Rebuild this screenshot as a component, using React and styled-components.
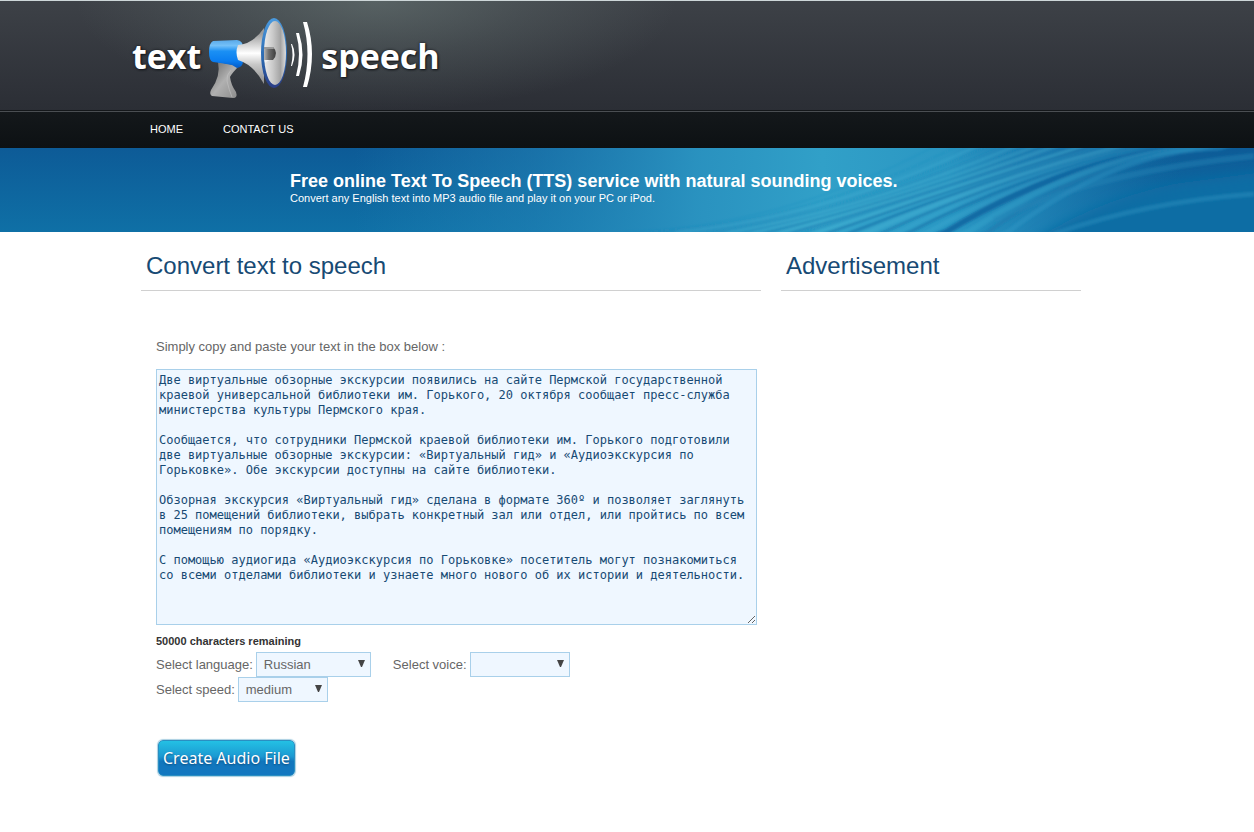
import React, { useState } from 'react'
import styled, { createGlobalStyle, css } from 'styled-components'

const GlobalStyle = createGlobalStyle`
  * {
    box-sizing: border-box;
  }
  body {
    margin: 0;
    background-color: white;
    color: #666;
    font-family: "Liberation Sans", Arial, sans-serif;
    font-size: 13px;
  }
`

const Inner = styled.div`
  width: 100%;
  max-width: 990px;
  margin: 0 auto;
`

const Header = styled.header`
  border-top: 1px solid #cdd6d8;
  background:
    radial-gradient(ellipse 300px 110px at 30% 0, rgba(120, 138, 134, 0.45), rgba(120, 138, 134, 0.2) 50%, rgba(120, 138, 134, 0)),
    linear-gradient(#3d4147, #2b2e35);
`

const Logo = styled.a`
  display: inline-flex;
  align-items: center;
  height: 109px;
  color: white;
  text-decoration: none;
`

const LogoText = styled.span`
  font-family: "Open Sans", sans-serif;
  font-size: 34px;
  font-weight: 700;
  line-height: 48px;
  text-shadow: 0 0 3px #15181c, 1px 1px 2px #15181c;
`

const LogoDrawing = styled.svg`
  width: 120px;
  height: 95px;
  margin-top: 4px;
`

const Nav = styled.nav`
  border-top: 1px solid #14171a;
  box-shadow: inset 0 1px #4a4e52;
  background: linear-gradient(#14181b, #0d1113);
`

const NavList = styled.ul`
  display: flex;
  gap: 40px;
  margin: 0;
  padding: 0 18px;
  list-style: none;
`

const NavLink = styled.a`
  color: white;
  font-size: 11px;
  line-height: 37px;
  text-decoration: none;
  text-transform: uppercase;
`

const Banner = styled.section`
  position: relative;
  overflow: hidden;
  height: 84px;
  padding-top: 22px;
  color: white;
  background: linear-gradient(#0d5b97, #0f70a6);
`

const Waves = styled.svg`
  position: absolute;
  top: 0;
  right: 0;
  width: 900px;
  height: 84px;
`

const BannerText = styled.div`
  position: relative;
  padding-left: 158px;
`

const BannerTitle = styled.h1`
  margin: 0;
  font-size: 18px;
  line-height: 22px;
`

const BannerNote = styled.p`
  margin: 0;
  font-size: 11px;
  line-height: 13px;
`

const Columns = styled.main`
  display: grid;
  grid-template-columns: minmax(0, 620px) minmax(0, 300px);
  gap: 20px;
  padding: 0 9px;
`

const SectionTitle = styled.h2`
  margin: 0;
  padding: 16px 5px 7px;
  border-bottom: 1px solid #d0d0d0;
  color: #174a74;
  font-size: 24px;
  font-weight: 400;
  line-height: 35px;
`

const Form = styled.form`
  display: flex;
  flex-direction: column;
  align-items: flex-start;
  padding: 48px 4px 48px 15px;
`

const fieldBox = css`
  border: 1px solid #a9d0ea;
  border-radius: 0;
  background-color: #eff7ff;
  outline: none;
`

const TextLabel = styled.label`
  line-height: 15px;
`

const TextBox = styled.textarea`
  ${fieldBox}
  display: block;
  width: 100%;
  height: 256px;
  margin: 15px 0 9px;
  padding: 3px 2px;
  color: #174a74;
  font-family: "DejaVu Sans Mono", monospace;
  font-size: 12px;
  line-height: 15px;
  resize: both;
`

const Remaining = styled.strong`
  color: #333;
  font-size: 11px;
  line-height: 15px;
  margin-bottom: 3px;
`

const FieldRow = styled.div`
  display: flex;
  gap: 22px;
`

const Field = styled.label`
  display: flex;
  align-items: center;
  gap: 3px;
`

const SelectWrap = styled.span`
  display: grid;
  align-items: center;
  width: ${(props) => props.$width}px;

  > * {
    grid-area: 1 / 1;
  }
`

const Select = styled.select`
  ${fieldBox}
  width: 100%;
  height: 25px;
  padding: 0 7px;
  color: #666;
  font-family: inherit;
  font-size: 13px;
  appearance: none;
`

const Arrow = styled.svg`
  justify-self: end;
  width: 7px;
  height: 7px;
  margin: 0 6px 2px 0;
  fill: #444;
  pointer-events: none;
`

const SubmitButton = styled.button`
  height: 36px;
  margin: 38px 2px 0;
  padding: 0 4px;
  border: 1px solid #2a8fc2;
  border-radius: 5px;
  background: linear-gradient(#23c0e4, #1c9ad2 45%, #1277bd 60%, #1277c0);
  box-shadow: 0 0 1px 1px #a9cfe2;
  color: white;
  font-family: "Noto Sans", sans-serif;
  font-size: 16px;
  line-height: 30px;
  text-shadow: 0 1px 2px #0b4f80;
  white-space: nowrap;
  cursor: pointer;
`

const article = `Две виртуальные обзорные экскурсии появились на сайте Пермской государственной краевой универсальной библиотеки им. Горького, 20 октября сообщает пресс-служба министерства культуры Пермского края.

Сообщается, что сотрудники Пермской краевой библиотеки им. Горького подготовили две виртуальные обзорные экскурсии: «Виртуальный гид» и «Аудиоэкскурсия по Горьковке». Обе экскурсии доступны на сайте библиотеки.

Обзорная экскурсия «Виртуальный гид» сделана в формате 360º и позволяет заглянуть в 25 помещений библиотеки, выбрать конкретный зал или отдел, или пройтись по всем помещениям по порядку.

С помощью аудиогида «Аудиоэкскурсия по Горьковке» посетитель могут познакомиться со всеми отделами библиотеки и узнаете много нового об их истории и деятельности.`

// Strands of the banner: [x at the bottom edge, colour, width, opacity]
const strands = [
  [270, '#1f86b8', 1, 0.3],
  [300, '#1f86b8', 1, 0.4],
  [325, '#45b3d6', 2, 0.3],
  [340, '#1f86b8', 1, 0.5],
  [362, '#1f86b8', 2, 0.4],
  [376, '#4bb8d8', 2, 0.3],
  [390, '#1f86b8', 1, 0.6],
  [402, '#4bb8d8', 2, 0.3],
  [414, '#1a7cb0', 2, 0.5],
  [428, '#4bb8d8', 3, 0.3],
  [440, '#1a7cb0', 2, 0.6],
  [452, '#1a7cb0', 1, 0.6],
  [464, '#4bb8d8', 3, 0.4],
  [476, '#1672a8', 2, 0.6],
  [488, '#3fb0d3', 2, 0.3],
  [498, '#1672a8', 3, 0.6],
  [514, '#48b6d8', 5, 0.4],
  [530, '#1672a8', 2, 0.6],
  [544, '#3fb0d3', 4, 0.3],
  [556, '#1672a8', 3, 0.6],
  [574, '#3fb0d3', 4, 0.3],
  [592, '#1164a0', 6, 0.85],
  [614, '#3aaad0', 6, 0.4],
  [634, '#1a78ae', 4, 0.6],
  [654, '#2f9cc8', 5, 0.4],
]

// Strands sag on the left of the banner and bulge on its right
const strandPath = (x) => {
  const top = 600 + (x - 300) * 0.75
  const bend = 74 - (x - 300) * 0.2
  return `M${x - 20} 92 L${x} 84 Q${(x + top) / 2} ${bend} ${top} 0 L${top + 40} -12`
}

const BannerWaves = () => (
  <Waves viewBox="0 0 900 84" aria-hidden="true">
    <defs>
      <linearGradient id="glow">
        <stop offset="0" stopColor="#2587b9" stopOpacity="0" />
        <stop offset="0.2" stopColor="#2587b9" stopOpacity="0.5" />
        <stop offset="0.38" stopColor="#2b94c1" stopOpacity="0.95" />
        <stop offset="0.52" stopColor="#31a0c8" />
        <stop offset="0.66" stopColor="#2d9ac5" stopOpacity="0.95" />
        <stop offset="0.76" stopColor="#2488ba" stopOpacity="0.7" />
        <stop offset="0.92" stopColor="#1a78ae" stopOpacity="0" />
      </linearGradient>
      <filter id="soft">
        <feGaussianBlur stdDeviation="1" />
      </filter>
      <filter id="softer">
        <feGaussianBlur stdDeviation="6" />
      </filter>
    </defs>
    <rect width="900" height="84" fill="url(#glow)" />
    <path d="M670 100 Q730 56 820 36 L940 20 V110Z" fill="#0f6da4" filter="url(#softer)" />
    <g fill="none" filter="url(#soft)">
      {strands.map(([x, color, width, opacity]) => (
        <path key={x} d={strandPath(x)} stroke={color} strokeWidth={width} opacity={opacity} />
      ))}
      <path d="M640 72 Q740 24 900 8" stroke="#2587b9" strokeWidth="6" opacity="0.4" />
      <path d="M700 86 Q790 54 900 46" stroke="#2f96c3" strokeWidth="5" opacity="0.4" />
    </g>
  </Waves>
)

const Megaphone = () => (
  <LogoDrawing viewBox="0 0 120 95" aria-hidden="true">
    <defs>
      <linearGradient id="grip" x1="0" y1="0" x2="1" y2="1">
        <stop offset="0" stopColor="#666" />
        <stop offset="0.5" stopColor="#b0b0b0" />
        <stop offset="1" stopColor="#8a8a8a" />
      </linearGradient>
      <linearGradient id="barrel" x1="0" y1="0" x2="0" y2="1">
        <stop offset="0" stopColor="#5aa9e8" />
        <stop offset="0.2" stopColor="#74c0f8" />
        <stop offset="0.4" stopColor="#1b90f4" />
        <stop offset="0.75" stopColor="#0a7df0" />
        <stop offset="1" stopColor="#0559c4" />
      </linearGradient>
      <linearGradient id="horn" x1="0" y1="0" x2="0" y2="1">
        <stop offset="0.1" stopColor="#9b9b9b" />
        <stop offset="0.45" stopColor="#ffffff" />
        <stop offset="0.65" stopColor="#c8c8c8" />
        <stop offset="1" stopColor="#8d8d8d" />
      </linearGradient>
      <linearGradient id="rim" x1="0" y1="0" x2="0" y2="1">
        <stop offset="0" stopColor="#4a9be0" />
        <stop offset="0.6" stopColor="#2a66ad" />
        <stop offset="1" stopColor="#2b3c86" />
      </linearGradient>
      <linearGradient id="bell" x1="0" y1="0" x2="1" y2="0">
        <stop offset="0" stopColor="#ececec" />
        <stop offset="0.4" stopColor="#cacaca" />
        <stop offset="0.75" stopColor="#a4a4a4" />
        <stop offset="1" stopColor="#dedede" />
      </linearGradient>
      <linearGradient id="core" x1="0" y1="0" x2="1" y2="0">
        <stop offset="0" stopColor="#b5b5b5" />
        <stop offset="0.4" stopColor="#6e6e6e" />
        <stop offset="1" stopColor="#3c3c3c" />
      </linearGradient>
    </defs>
    <path d="M17 52 L38 56 Q31 63 29 67 Q30 75 35 82 Q37 88 32 88 L11 86 Q8 84 10 80 Q20 66 17 52Z" fill="url(#grip)" />
    <path d="M30 60 Q25 65 26 71 Q28 80 31 87" fill="none" stroke="#c9c9c9" opacity="0.5" />
    <path d="M12 31 L36 30 Q42 31 42 37 V51 Q42 57 36 58 L31 55 Q20 53 12 52 Q8 51 8 42 Q8 33 12 31Z" fill="url(#barrel)" />
    <path d="M37 35 Q52 34 63 18 V74 Q53 55 37 50 Q34 42 37 35Z" fill="url(#horn)" />
    <ellipse cx="73" cy="43" rx="13" ry="35" fill="url(#rim)" />
    <ellipse cx="74" cy="43" rx="11" ry="32" fill="url(#bell)" />
    <path d="M63 48 H71 L64 53Z" fill="#f2f2f2" />
    <path d="M63 37 H72 Q78 43 72 50 H63Z" fill="url(#core)" />
    <path d="M63 37 H72 L73 39 H63Z" fill="#9a9a9a" />
    <g fill="#fff">
      <path d="M90 34 H91 Q96 44 91 56 H90 Q93 44 90 34Z" />
      <path d="M95 23 H98 Q105 45 98 66 H95 Q101 44 95 23Z" />
      <path d="M102 12 H106 Q116 44 106 77 H102 Q111 44 102 12Z" />
    </g>
  </LogoDrawing>
)

const SelectField = ({ label, width, options }) => (
  <Field>
    {label}
    <SelectWrap $width={width}>
      <Select>
        {options.map((option) => (
          <option key={option}>{option}</option>
        ))}
      </Select>
      <Arrow viewBox="0 0 7 7" aria-hidden="true">
        <path d="M0 0 H7 L4 7 H3Z" />
      </Arrow>
    </SelectWrap>
  </Field>
)

const App = () => {
  const [text, setText] = useState(article)

  return (
    <>
      <GlobalStyle />
      <Header>
        <Inner>
          <Logo href="#">
            <LogoText>text</LogoText>
            <Megaphone />
            <LogoText>speech</LogoText>
          </Logo>
        </Inner>
      </Header>
      <Nav>
        <Inner>
          <NavList>
            <li><NavLink href="#">Home</NavLink></li>
            <li><NavLink href="#">Contact us</NavLink></li>
          </NavList>
        </Inner>
      </Nav>
      <Banner>
        <BannerWaves />
        <Inner>
          <BannerText>
            <BannerTitle>Free online Text To Speech (TTS) service with natural sounding voices.</BannerTitle>
            <BannerNote>Convert any English text into MP3 audio file and play it on your PC or iPod.</BannerNote>
          </BannerText>
        </Inner>
      </Banner>
      <Inner>
        <Columns>
          <section>
            <SectionTitle>Convert text to speech</SectionTitle>
            <Form onSubmit={(e) => e.preventDefault()}>
              <TextLabel htmlFor="text">Simply copy and paste your text in the box below :</TextLabel>
              <TextBox id="text" spellCheck={false} value={text} onChange={(e) => setText(e.target.value)} />
              <Remaining>50000 characters remaining</Remaining>
              <FieldRow>
                <SelectField label="Select language:" width={115} options={['Russian', 'English']} />
                <SelectField label="Select voice:" width={100} options={['']} />
              </FieldRow>
              <FieldRow>
                <SelectField label="Select speed:" width={90} options={['medium', 'slow', 'fast']} />
              </FieldRow>
              <SubmitButton type="submit">Create Audio File</SubmitButton>
            </Form>
          </section>
          <aside>
            <SectionTitle>Advertisement</SectionTitle>
          </aside>
        </Columns>
      </Inner>
    </>
  )
}

export default App
